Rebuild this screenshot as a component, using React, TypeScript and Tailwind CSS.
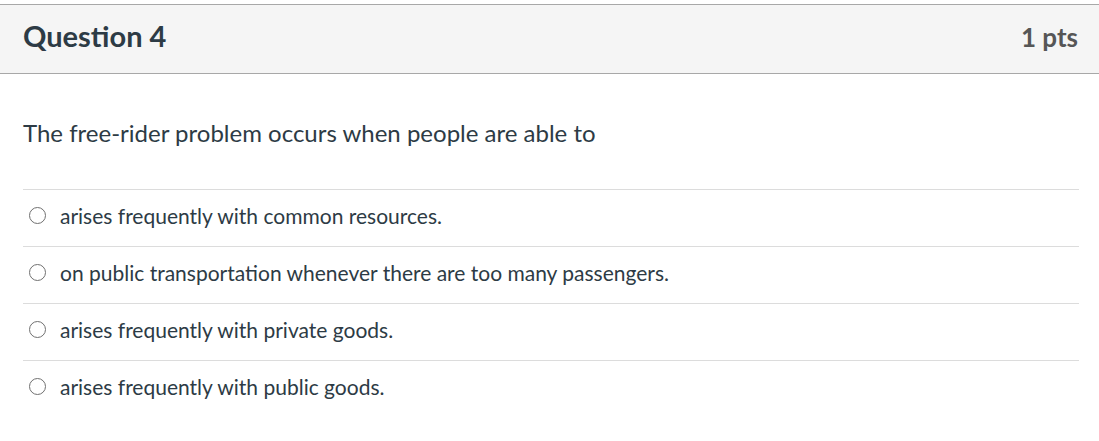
import React from "react";

const answers = [
  "arises frequently with common resources.",
  "on public transportation whenever there are too many passengers.",
  "arises frequently with private goods.",
  "arises frequently with public goods.",
];

export default function App() {
  return (
    <div className="w-[1099px] h-[441px] bg-white pt-[4px]" style={{ fontFamily: "Lato, 'Open Sans', sans-serif" }}>
      <div className="flex items-center justify-between h-[70px] bg-[#f5f5f5] border-y border-[#a8a8a8] pl-[23px] pr-[21px]">
        <div className="text-[29px] leading-none font-bold text-[#2d3b45] pb-[7px]">Question 4</div>
        <div className="text-[26px] leading-none font-bold text-[#565656] pb-[4px]">1 pts</div>
      </div>
      <div className="pl-[23px] pr-[20px]">
        <div className="h-[115px] flex items-center pt-[3px] text-[24px] text-[#2d3b45]">The free-rider problem occurs when people are able to</div>
        <div className="flex flex-col">
          {answers.map((a) => (
            <div key={a} className="flex items-center h-[57px] border-t border-[#dcdcdc] gap-[14px] pl-[6px] pb-[5px]">
              <span className="w-[17px] h-[17px] rounded-full border-[1.5px] border-[#707070] bg-white shrink-0" />
              <span className="text-[21px] text-[#2d3b45]">{a}</span>
            </div>
          ))}
        </div>
      </div>
    </div>
  );
}
